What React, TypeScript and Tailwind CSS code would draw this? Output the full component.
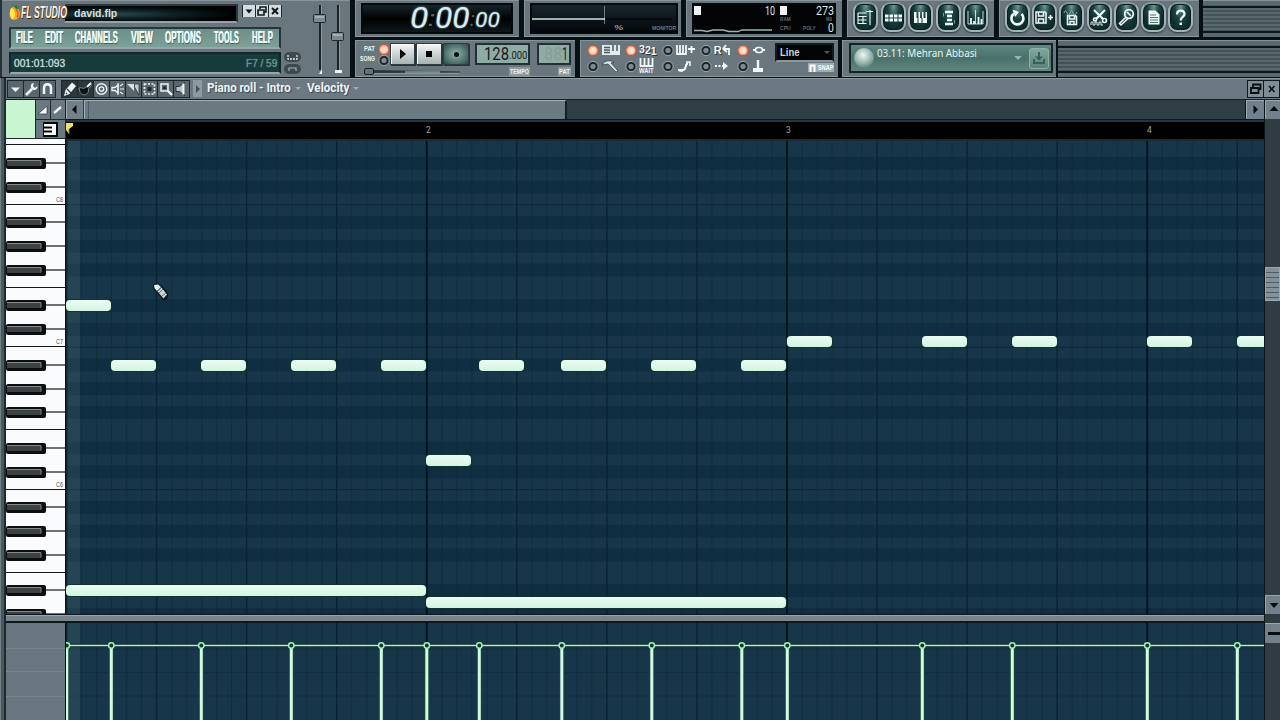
import React, { useLayoutEffect, useRef } from "react";

function Fit({ w, className = "", children }: { w: number; className?: string; children: React.ReactNode }) {
  const ref = useRef<HTMLSpanElement>(null);
  useLayoutEffect(() => {
    const el = ref.current;
    if (el) el.style.transform = `scaleX(${w / el.offsetWidth})`;
  }, [w]);
  return (
    <span className="flex shrink-0" style={{ width: w }}>
      <span ref={ref} className={"block shrink-0 origin-left whitespace-nowrap " + className}>
        {children}
      </span>
    </span>
  );
}

const Panel = ({ className = "", children }: { className?: string; children?: React.ReactNode }) => (
  <div className={"flex shrink-0 border-b border-[#8a979c] bg-[#69767e] shadow-[inset_1px_1px_0_#87949a] " + className}>{children}</div>
);

const Stripes = ({ className = "" }: { className?: string }) => (
  <div className={"flex grow flex-col justify-between border-t border-[#87949a] bg-[#4a5a60] " + className}>
    <div className="h-1 bg-[#5a696f]" />
    <div className="mt-px grow border-y-2 border-[#0c171b] bg-[repeating-linear-gradient(to_bottom,#5a696e_0px,#5a696e_2px,#445359_2px,#445359_4px)]" />
    <div className="h-1 bg-[#5a696f]" />
  </div>
);

function Glyph({ w = 16, h = 16, children }: { w?: number; h?: number; children: React.ReactNode }) {
  return (
    <svg width={w} height={h} viewBox={`0 0 ${w} ${h}`} className="shrink-0" fill="none">
      {children}
    </svg>
  );
}

const menu: [string, number, string][] = [
  ["FILE", 17, "ml-[5px]"],
  ["EDIT", 18, "ml-[12px]"],
  ["CHANNELS", 43, "ml-[12px]"],
  ["VIEW", 22, "ml-[13px]"],
  ["OPTIONS", 36, "ml-[12px]"],
  ["TOOLS", 25, "ml-[13px]"],
  ["HELP", 21, "ml-[13px]"],
];

function LeftPanel() {
  return (
    <div className="flex h-[77px] w-[350px] shrink-0 border-l-2 border-[#26343a] bg-[#69767e] pl-[7px] shadow-[inset_0_1px_0_#87949a]">
      <div className="w-[273px] shrink-0 pt-[3px]">
        <div className="flex h-[20px]">
          <Glyph w={12} h={20}>
            <path d="M5 3C1 5 0 11 1 14c1 3 5 4 7 2 3-2 4-6 2-9-1-2-3-3-5-4Z" fill="#f7a71b" />
            <path d="M2 5c-2 4-1 9 1 11 2 0 3-2 3-5C6 8 4 5 2 5Z" fill="#ffe84a" />
            <path d="M5 4 3 1l3 2 2-2 0 3 2 0-2 3Z" fill="#2e7f2c" />
            <path d="M7 7c2 1 3 4 1 7" stroke="#e85d12" strokeWidth="1.5" />
          </Glyph>
          <Fit w={46} className="font-['Liberation_Sans'] text-[16px] font-bold italic leading-[20px] text-[#fff3e2] [text-shadow:1px_1px_0_#43281c,0_0_2px_#8b4c25]">FL STUDIO</Fit>
          <div className="-ml-[2px] mt-px flex h-[19px] w-[174px] items-center border-2 border-l-0 border-[#2b393e] border-b-[#96a3a7] bg-[radial-gradient(ellipse_at_30%_55%,#28484d_0%,#0b1d21_38%,#010304_70%)] pl-[9px]">
            <Fit w={43} className="font-['Liberation_Sans'] text-[11.5px] font-bold leading-[15px] text-[#d7e1e1]">david.flp</Fit>
          </div>
          <div className="ml-[4px] mt-[2px] flex h-[12px] gap-px bg-[#1b282d] px-px">
            <Glyph w={12} h={12}><path d="M0 0h12v12H0z" fill="#d3dcde" /><path d="M2.500 4.500h7L6 8.500z" fill="#10181b" /></Glyph>
            <Glyph w={12} h={12}><path d="M0 0h12v12H0z" fill="#d3dcde" /><path d="M4 4V2h6v5H8M2 5h6v5H2z" stroke="#10181b" strokeWidth="1.6" /></Glyph>
            <Glyph w={12} h={12}><path d="M0 0h12v12H0z" fill="#d3dcde" /><path d="m3 3 6 6m0-6-6 6" stroke="#10181b" strokeWidth="2" /></Glyph>
          </div>
        </div>
        <div className="mt-[4px] flex h-[22px] w-[272px] items-center border-2 border-[#24363a] border-b-[#9aa6aa] bg-linear-to-b from-[#6c8f89] to-[#7da199]">
          {menu.map(([t, w, m]) => (
            <div key={t} className={m}>
              <Fit w={w} className="font-['Liberation_Sans'] text-[16px] font-bold leading-[18px] text-[#f0fffb] [text-shadow:0_0_1px_#d8ebe6,1px_1px_1px_#31524f]">{t}</Fit>
            </div>
          ))}
        </div>
        <div className="mt-[3px] flex h-[22px] w-[272px] items-center justify-between border-2 border-[#13262a] border-b-[#9aa6aa] bg-[#173b3b] pl-[3px] pr-[2px]">
          <Fit w={51} className="font-['Liberation_Sans'] text-[11px] leading-[16px] text-[#c4d8d6] [text-shadow:0_0_1px_#c4d8d6]">001:01:093</Fit>
          <Fit w={31} className="font-['Liberation_Sans'] text-[11px] leading-[16px] text-[#6f9290] [text-shadow:0_0_1px_#6f9290]">F7 / 59</Fit>
        </div>
      </div>
      <div className="flex w-[22px] shrink-0 flex-col gap-px pl-[2px] pt-[52px]">
        <Glyph w={17} h={11}><rect width="17" height="10" rx="5" fill="#3d4a50" /><path d="M4 3v4h9V3" stroke="#e2eaec" strokeDasharray="2 1" strokeWidth="1.300" /></Glyph>
        <Glyph w={17} h={11}><rect width="17" height="10" rx="5" fill="#3d4a50" /><path d="M5 7V4h7v3" stroke="#a9b6b9" strokeWidth="1.200" /></Glyph>
      </div>
      <Glyph w={44} h={77}>
        <path d="M10 7h12M10 10h12" stroke="#55636a" strokeDasharray="2 6" />
        <path d="M16 5v65M34 5v65" stroke="#182328" strokeWidth="2" />
        <path d="M17.500 5v65M35.500 5v65" stroke="#8d999e" />
        <rect x="9.500" y="14.500" width="12" height="8" rx="1" fill="#7c8a90" stroke="#1d2a2f" />
        <path d="M11 17h9" stroke="#cbd5d8" />
        <rect x="27.500" y="32.500" width="12" height="8" rx="1" fill="#7c8a90" stroke="#1d2a2f" />
        <path d="M29 35h9" stroke="#cbd5d8" />
        <path d="m15 74 3-5v5zM31 73h7v-3h-7z" fill="#eef4f5" />
      </Glyph>
    </div>
  );
}

const digit = "font-['Roboto'] font-normal italic text-[#dcebef] [text-shadow:0_0_2px_#7fb0bb]";

function TimePanel() {
  return (
    <Panel className="w-[164px] px-[6px] pb-[2px] pt-[3px]">
      <div className="flex grow items-end border-2 border-[#05090b] bg-[linear-gradient(to_bottom,#17242a,#030507_45%,#000_50%,#10181c)] pl-[47px]">
        <Fit w={18} className={digit + " text-[30px] leading-[28px]"}>0</Fit>
        <Fit w={7} className="font-['Roboto'] text-[22px] italic leading-[26px] text-[#59686d]">:</Fit>
        <Fit w={35} className={digit + " text-[30px] leading-[28px]"}>00</Fit>
        <Fit w={5} className="font-['Roboto'] text-[20px] italic leading-[26px] text-[#59686d]">:</Fit>
        <Fit w={25} className={digit + " text-[21px] leading-[24px]"}>00</Fit>
      </div>
    </Panel>
  );
}

function ScopePanel() {
  return (
    <Panel className="w-[157px] px-[6px] pb-[2px] pt-[3px]">
      <div className="flex grow flex-col justify-between border-2 border-[#05090b] bg-linear-to-b from-[#19262d] to-[#05080a]">
        <Glyph w={140} h={19}>
          <path d="M72.500 1v18" stroke="#6b7a80" />
          <path d="M0 14h73" stroke="#d8e0e2" strokeWidth="1.700" />
          <path d="M74 14h66" stroke="#06090a" strokeWidth="2" />
        </Glyph>
        <div className="flex items-center pl-[82px]">
          <Fit w={9} className="font-['Liberation_Sans'] text-[7px] font-bold italic leading-[8px] text-[#8a979b]">%</Fit>
          <div className="ml-[29px]"><Fit w={24} className="font-['Liberation_Sans'] text-[6px] font-bold leading-[8px] text-[#6f7c80]">MONITOR</Fit></div>
        </div>
      </div>
    </Panel>
  );
}

function CpuPanel() {
  const tiny = "font-['Liberation_Sans'] text-[6px] font-bold leading-[7px] text-[#5d6a6e]";
  const num = "font-['Roboto'] text-[12.500px] leading-[11px] text-[#dde8ea]";
  return (
    <Panel className="w-[156px] px-[6px] pb-[2px] pt-[3px]">
      <div className="flex grow border-2 border-[#05090b] bg-[#020405]">
        <div className="flex w-[81px] shrink-0 flex-col">
          <div className="flex items-start justify-between">
            <div className="mt-px h-[9px] w-[7px] bg-[#eef3f4]" />
            <Fit w={10} className={num}>10</Fit>
          </div>
          <Glyph w={81} h={17}><path d="M0 14.500h8l5 1 6-1.500h10l6 1.500h9l4-1.500h30" stroke="#a3b0b3" strokeWidth="1.300" /></Glyph>
        </div>
        <div className="flex grow flex-col pl-[5px]">
          <div className="flex items-start justify-between">
            <div className="mt-px h-[9px] w-[7px] bg-[#eef3f4]" />
            <Fit w={18} className={num}>273</Fit>
          </div>
          <div className="flex justify-between pr-[2px]"><Fit w={11} className={tiny}>RAM</Fit><Fit w={6} className={tiny}>MB</Fit></div>
          <div className="flex items-center justify-between">
            <Fit w={11} className={tiny}>CPU</Fit>
            <Fit w={13} className={tiny}>POLY</Fit>
            <Fit w={6} className={"font-['Roboto'] text-[12px] leading-[10px] text-[#dde8ea]"}>0</Fit>
          </div>
        </div>
      </div>
    </Panel>
  );
}

function RoundButton({ children }: { children: React.ReactNode }) {
  return (
    <div className="flex h-[30px] w-[25px] shrink-0 items-center justify-center rounded-[9px] border-2 border-[#a5b3b5] border-t-[#82949a] bg-[radial-gradient(ellipse_at_50%_10%,#6c9690_0%,#1b4241_38%,#0a2a2a_75%,#2b5c57_100%)] shadow-[inset_0_0_0_1px_#0b1d1f,0_1px_2px_#26343a]">
      <svg width="19" height="19" viewBox="0 0 19 19" fill="none" stroke="#f1fbf9" strokeWidth="1.600" className="shrink-0">
        {children}
      </svg>
    </div>
  );
}

function WindowButtons() {
  return (
    <Panel className="w-[147px] gap-[2.500px] pl-[6px] pt-[2px]">
      <RoundButton><path d="M2 5h8.500M2 8.500h8.500M2 12h8.500M2 15.500h8.500M14 2v15M10 3.500h7M2 5v11M7 8v8" strokeWidth="1.100" /></RoundButton>
      <RoundButton><path d="M1 8h3.500m1 0h3.500m1 0h3.500m1 0H18M1 12h3.500m1 0h3.500m1 0h3.500m1 0H18" strokeWidth="3.200" /></RoundButton>
      <RoundButton><path d="M3 4v11h13V4h-1.500v6h-2V4h-1.500v6h-2V4H7.500v6h-2V4Z" fill="#f1fbf9" stroke="none" /><path d="M7 10v5m4-5v5" stroke="#173b3b" strokeWidth="1" /></RoundButton>
      <RoundButton><path d="M6 4h8M8 8h5M8 12h5M6 16h8" strokeWidth="2.400" /><path d="M4.500 5v3.500M15.500 12v3.500" stroke="#8fb2ad" strokeWidth=".8" /></RoundButton>
      <RoundButton><path d="M2 3v13h15V3M9.500 2v14" strokeWidth=".8" /><path d="M5 16v-6M8 16v-3M12.500 16V9M15.500 16v-5" strokeWidth="1.800" /></RoundButton>
    </Panel>
  );
}

function ActionButtons() {
  return (
    <Panel className="w-[200px] gap-[2.200px] pl-[6px] pt-[2px]">
      <RoundButton><path d="M13.500 6A6 6 0 1 1 6 5.500" strokeWidth="2.600" /><path d="M4.500 1.500 11 4 7 9Z" fill="#f1fbf9" stroke="none" /></RoundButton>
      <RoundButton><path d="M1 4h9l1 1v10H1zM3.500 4v4h5V4M3.500 15v-4h5v4" strokeWidth="1.500" /><path d="M13 9.500h5M15.500 7v5" /></RoundButton>
      <RoundButton><path d="M5.500 7.500h8l1 1v8h-9zM7.500 8v3h5V8M8 16v-2.500h4V16" strokeWidth="1.500" /><path d="M2 5c1-3 2-3 3 0s2 3 3 0 2-3 3 0 2 3 4-1" stroke="#8fb2ad" strokeWidth="1" /></RoundButton>
      <RoundButton><path d="m4 2 9 9M15 2 6 11" strokeWidth="2" /><circle cx="14.500" cy="12.500" r="2" /><circle cx="5" cy="11.500" r="1.500" /><path d="M1 17v-3h2v3h2v-3h2v3h2v-3h2v3h2" strokeWidth=".9" /></RoundButton>
      <RoundButton><circle cx="12" cy="6" r="4.300" strokeWidth="1.800" /><path d="M9 9 2.500 15.500l1.500 1.500 7-6.500M10 4l4 4" /></RoundButton>
      <RoundButton><path d="M4.500 2.500h7l4 4v10h-11z" fill="#f1fbf9" stroke="none" /><path d="M6 7h6M6 9.500h8M6 12h8M6 14.500h8" stroke="#47716c" strokeWidth="1" /></RoundButton>
      <RoundButton><path d="M6 6.500c0-5 7.500-5 7.500-.5 0 3-3.800 3-3.800 6.500" strokeWidth="2.300" /><path d="M8.500 14.500h2.500v2.500H8.500z" fill="#f1fbf9" stroke="none" /></RoundButton>
    </Panel>
  );
}

const Led = ({ on }: { on?: boolean }) => (
  <Glyph w={12} h={13}>
    <circle cx="6" cy="6.500" r="5.200" fill={on ? "#ff8d62" : "#2a363b"} stroke={on ? "#b9563f" : "#9aa7ab"} />
    <circle cx="6" cy="6.500" r="3.300" fill={on ? "#ffe3cf" : "#7b888d"} stroke={on ? "#ffc2a0" : "#152024"} strokeWidth="1.200" />
  </Glyph>
);

const miniWhite = "font-['Liberation_Sans'] text-[7.5px] font-bold leading-[9px] text-[#eef5f6]";

function Transport() {
  const key = "flex h-[22px] items-center justify-center border border-[#2e3b40] shadow-[inset_1px_1px_0_#fff,1px_1px_0_#27343a]";
  return (
    <Panel className="w-[220px] pl-[5px] pt-[3px]">
      <div className="flex w-[137px] shrink-0 flex-col">
        <div className="flex h-[23px]">
          <div className="flex w-[18px] flex-col items-end gap-[1px] pr-[3px] pt-px">
            <Fit w={11} className={miniWhite}>PAT</Fit>
            <Fit w={15} className={miniWhite}>SONG</Fit>
          </div>
          <div className="flex flex-col -space-y-[2px]"><Led on /><Led /></div>
          <div className={key + " w-[25px] bg-linear-to-b from-[#f3f6f6] to-[#a7b2b4]"}><Glyph w={10} h={12}><path d="M2 1v10l6-5z" fill="#020405" /></Glyph></div>
          <div className={key + " ml-px w-[26px] bg-linear-to-b from-[#f3f6f6] to-[#a7b2b4]"}><div className="h-[6px] w-[6px] bg-[#020405]" /></div>
          <div className="ml-px flex h-[22px] w-[26px] items-center justify-center border border-[#2e3b40] bg-[radial-gradient(#93b3ab,#2b4b4a)] shadow-[1px_1px_0_#27343a]"><div className="h-[5px] w-[5px] rounded-full bg-[#04100f]" /></div>
        </div>
        <Glyph w={112} h={12}>
          <path d="M12 4 100 5.500v1L12 7z" fill="#27363b" />
          <path d="M14 7.500h85" stroke="#8b9a9e" />
          <path d="M45 6h35" stroke="#a9cdc6" />
          <rect x="4.500" y="2.500" width="9" height="6" rx="1.500" fill="#63717a" stroke="#172226" />
        </Glyph>
      </div>
      <div className="-ml-[22px] flex w-[55px] shrink-0 flex-col items-end">
        <div className="flex h-[22px] w-[55px] items-end border-2 border-[#213035] bg-[#90aaa4] pl-[7px]">
          <Fit w={25} className="font-['Roboto'] text-[19px] leading-[19px] text-[#10201f]">128</Fit>
          <Fit w={18} className="font-['Roboto'] text-[11px] leading-[15px] text-[#10201f]">.000</Fit>
        </div>
        <div className="mt-[2px] flex bg-[#8b999e] px-px"><Fit w={19} className={miniWhite}>TEMPO</Fit></div>
      </div>
      <div className="ml-[7px] flex w-[34px] shrink-0 flex-col items-end">
        <div className="flex h-[22px] w-[34px] items-end justify-end border-2 border-[#213035] bg-[#90aaa4] pr-px">
          <Fit w={18} className="font-['Roboto'] text-[19px] leading-[19px] text-[#859f99]">88</Fit>
          <Fit w={6} className="font-['Roboto'] text-[19px] leading-[19px] text-[#10201f]">1</Fit>
        </div>
        <div className="mt-[2px] flex bg-[#8b999e] px-px"><Fit w={11} className={miniWhite}>PAT</Fit></div>
      </div>
    </Panel>
  );
}

function Switches() {
  const W = "#f2f7f8";
  const cell = "flex h-[16px] items-center gap-[2px]";
  return (
    <Panel className="w-[258px] pl-[7px] pt-[2px]">
      <div className="grid w-[188px] shrink-0 grid-cols-5 gap-y-0 self-start">
        <div className={cell}><Led on /><Glyph w={20} h={14}><path d="M1 2h18v10H1z" fill="#e2eaec" /><path d="M3 4.500h6M3 7h6M3 9.500h6M12 2v6M16 2v6" stroke="#4a595f" strokeWidth="1.500" /></Glyph></div>
        <div className={cell}><Led on /><Fit w={18} className="font-['Liberation_Sans'] text-[10px] font-bold leading-[12px] text-[#f2f7f8] [text-shadow:1px_1px_0_#27343a]">3<span className="relative top-px">2</span><span className="relative top-[2px]">1</span></Fit></div>
        <div className={cell}><Led /><Glyph w={20} h={14}><path d="M1 2v9h9V2M4 2v8M7 2v8M12 6h7M15.500 3v7" stroke={W} strokeWidth="1.800" /></Glyph></div>
        <div className={cell}><Led /><Fit w={8} className="font-['Liberation_Sans'] text-[11px] font-bold leading-[12px] text-[#f2f7f8] [text-shadow:1px_1px_0_#27343a]">R</Fit><div className="-ml-[2px] flex"><Glyph w={9} h={14}><path d="M1 6h6v6M4 2 1 6l4 3" stroke={W} strokeWidth="1.800" /></Glyph></div></div>
        <div className={cell}><Led on /><Glyph w={16} h={14}><path d="M2 7h3M11 7h3" stroke={W} strokeWidth="2" /><rect x="4.500" y="4.500" width="7" height="5" rx="2.500" stroke={W} strokeWidth="1.600" /></Glyph></div>
        <div className={cell}><Led /><Glyph w={20} h={14}><path d="M1 6C4 1 9 1 13 3l-3 1 7 8-2 1-8-8z" fill="#dbe4e6" stroke="#2b393e" strokeWidth=".7" /></Glyph></div>
        <div className={cell}><Led /><div className="flex flex-col"><Glyph w={16} h={9}><path d="M1.500 0v8h12V0M5.500 0v8M9.500 0v8" stroke={W} strokeWidth="1.800" /></Glyph><Fit w={15} className="font-['Liberation_Sans'] text-[7px] font-bold leading-[7px] text-[#f2f7f8]">WAIT</Fit></div></div>
        <div className={cell}><Led /><Glyph w={16} h={14}><path d="M2 11h5c4 0 1-5 5-7" stroke={W} strokeWidth="2" /><path d="M10 3h4v4M3 12h4" stroke={W} strokeWidth="1.500" /></Glyph></div>
        <div className={cell}><Led /><Glyph w={17} h={14}><path d="M1 7h10" stroke={W} strokeWidth="2" strokeDasharray="2 1.500" /><path d="M9 3v8l5-4z" fill={W} /></Glyph></div>
        <div className={cell}><Led /><Glyph w={14} h={14}><path d="M2 9h10v4H2z" fill={W} /><path d="M7 1v9" stroke={W} strokeWidth="2.400" /></Glyph></div>
      </div>
      <div className="flex w-[59px] shrink-0 flex-col items-end">
        <div className="mt-px flex h-[19px] w-[59px] items-center border-2 border-[#121c20] border-b-[#8a979c] bg-[#020405] pl-[3px]">
          <Fit w={20} className="font-['Liberation_Sans'] text-[10px] font-bold leading-[12px] text-[#c9d5d7]">Line</Fit>
          <div className="ml-[24px]"><Glyph w={6} h={4}><path d="M0 0h6L3 3z" fill="#4d5c61" /></Glyph></div>
        </div>
        <div className="mt-px flex h-[9px] items-center gap-[2px] bg-[#9faeb3] px-px">
          <Glyph w={7} h={8}><path d="M1.500 8V1.500h4V8" stroke="#fff" strokeWidth="2" /></Glyph>
          <Fit w={15} className="font-['Liberation_Sans'] text-[7px] font-bold leading-[8px] text-white">SNAP</Fit>
        </div>
      </div>
    </Panel>
  );
}

function NewsPanel() {
  return (
    <Panel className="w-[214px] px-[7px] pb-[3px] pt-[3px]">
      <div className="flex grow items-center border-2 border-[#142326] bg-linear-to-b from-[#5e8780] via-[#4a706b] to-[#5f877f] pl-[3px] pr-[2px]">
        <div className="h-[20px] w-[20px] rounded-full bg-[radial-gradient(circle_at_45%_35%,#eef6f3,#9dbab2_45%,#55817a_80%)]" />
        <div className="-mt-[11px] ml-[3px]"><Fit w={100} className="font-['Noto_Sans'] text-[11px] leading-[14px] text-[#e9f3f0]">03.11: Mehran Abbasi</Fit></div>
        <div className="ml-[37px]"><Glyph w={8} h={5}><path d="M0 0h8L4 4z" fill="#94b4ac" /></Glyph></div>
        <div className="ml-[7px] flex h-[21px] w-[20px] items-center justify-center rounded-[3px] border border-[#8fb0a7] bg-linear-to-b from-[#84a59c] to-[#5b837b]">
          <Glyph w={14} h={14}><path d="M7 1v7M2 8v4h10V8" stroke="#36605b" strokeWidth="2" /><path d="M3 5.500h8l-4 4z" fill="#36605b" /></Glyph>
        </div>
      </div>
    </Panel>
  );
}

const ToolBtn = ({ dark, children }: { dark?: boolean; children: React.ReactNode }) => (
  <div className={"flex h-[16px] w-[15px] shrink-0 items-center justify-center " + (dark ? "bg-[#2c373c]" : "bg-[#59666d]")}>
    <svg width="15" height="16" viewBox="0 0 15 16" fill="none" stroke="#edf4f5" strokeWidth="1.700">{children}</svg>
  </div>
);

function Toolbar() {
  const title = "font-['Roboto'] text-[12.5px] font-bold leading-[16px] text-[#eef4f5] [text-shadow:1px_1px_1px_#3e4a50]";
  return (
    <div className="flex h-[22px] items-center border-b border-[#142024] bg-[#6c7982] pl-px shadow-[inset_0_1px_0_#8a979c]">
      <div className="flex gap-px border border-[#1a262b] bg-[#1a262b]">
        <ToolBtn><path d="M3 6.500h9L7.500 11z" fill="#edf4f5" stroke="none" /></ToolBtn>
        <ToolBtn><path d="m2 14 6-6" strokeWidth="2.600" /><path d="M10 2C6 2 6 7 8.500 8.500 11 10 14 8 13.500 5L11 7 9 5z" fill="#edf4f5" stroke="none" /></ToolBtn>
        <ToolBtn><path d="M4 13V7c0-5 7-5 7 0v6" strokeWidth="2.500" /></ToolBtn>
      </div>
      <div className="ml-[5px] flex gap-px border border-[#1a262b] bg-[#1a262b]">
        <ToolBtn dark><path d="m2 15 1.500-6L10 1.500 14 5 7.500 13z" fill="#edf4f5" stroke="none" /><path d="m5 8 4 4M4 12l1 1" stroke="#27343a" strokeWidth="1.200" /></ToolBtn>
        <ToolBtn dark><path d="M1 7c3-1 3 1 6 0l5-5 1.500 2-3 4c1 7-8 8-9 1z" fill="#0a1215" stroke="#8d9a9f" strokeWidth=".8" /><path d="m9 6 4-4" strokeWidth="2" /></ToolBtn>
        <ToolBtn><circle cx="7.500" cy="8" r="5.300" strokeWidth="1.400" /><circle cx="7.500" cy="8" r="2.200" strokeWidth="1.300" /></ToolBtn>
        <ToolBtn><path d="M2 6.500h3L8 4v8L5 9.500H2z" strokeWidth="1.300" /><path d="m10 5 3-2M10 8h4M10 11l3 2M8 2v12" strokeWidth="1.100" /></ToolBtn>
        <ToolBtn><path d="M1 3h7v7z" fill="#d8e1e3" stroke="none" /><path d="M8.500 3H13v11L8.500 6z" fill="#c3ced1" stroke="#27343a" strokeWidth=".8" /></ToolBtn>
        <ToolBtn><rect x="2.500" y="3" width="10" height="10" strokeDasharray="2 1.500" /><rect x="5.500" y="6" width="4" height="4" fill="#1d292e" stroke="none" /></ToolBtn>
        <ToolBtn><rect x="3" y="3" width="7" height="7" strokeWidth="1.500" /><path d="m10 10 4 4" strokeWidth="2.300" /><path d="M5 5.500h3v2.500H5z" fill="#1d292e" stroke="none" /></ToolBtn>
        <ToolBtn><path d="M2 5.500h3.500l5-4v13l-5-4H2z" fill="#b7c3c6" stroke="#10191d" strokeWidth=".8" /><path d="M9.500 2.500v11" strokeWidth="2.200" /></ToolBtn>
      </div>
      <div className="ml-[3px] flex h-[17px] w-[9px] items-center justify-center bg-[#8c9aa1]"><Glyph w={5} h={8}><path d="M1 0v8l4-4z" fill="#435158" /></Glyph></div>
      <div className="-mt-px ml-[5px]"><Fit w={84} className={title}>Piano roll - Intro</Fit></div>
      <div className="ml-[3px]"><Glyph w={8} h={5}><path d="M1 1h6L4 4z" fill="#9fabb0" /></Glyph></div>
      <div className="-mt-px ml-[5px]"><Fit w={42} className={title}>Velocity</Fit></div>
      <div className="ml-[3px]"><Glyph w={8} h={5}><path d="M1 1h6L4 4z" fill="#9fabb0" /></Glyph></div>
      <div className="ml-auto flex gap-px border border-[#10191d] bg-[#10191d]">
        <Glyph w={15} h={16}><path d="M0 0h15v16H0z" fill="#7f8e96" /><path d="M5 6V3.500h7.500V8H11M3 7h7.500v5H3z" stroke="#0a1114" strokeWidth="1.800" /></Glyph>
        <Glyph w={15} h={16}><path d="M0 0h15v16H0z" fill="#7f8e96" /><path d="m5 5 5.500 6m0-6L5 11" stroke="#0a1114" strokeWidth="1.600" /></Glyph>
      </div>
    </div>
  );
}

const ROW = 11.87;
const BASE = 347.2;
const BLACK = [1, 3, 6, 8, 10];
const rows = Array.from({ length: 44 }, (_, i) => {
  const n = i - 24;
  return { n, pc: ((n % 12) + 12) % 12, bottom: BASE - n * ROW };
});

function Keyboard() {
  return (
    <svg width="60" height="475" viewBox="6 139 60 475" className="block">
      <rect x="6" y="139" width="60" height="475" fill="#f9fbfc" />
      {rows.filter((r) => r.pc === 0 || r.pc === 5).map((r) => (
        <path key={r.n} d={`M6 ${Math.round(r.bottom) - 0.5}h59`} stroke="#10181c" />
      ))}
      {rows.filter((r) => BLACK.includes(r.pc)).map((r) => {
        const c = Math.round(r.bottom - ROW / 2 - 0.2) + 0.5;
        return (
          <g key={r.n}>
            <path d={`M44 ${c - 0.5}h21`} stroke="#10181c" strokeWidth="1.200" />
            <rect x="6" y={c - 5.500} width="40" height="11" rx="2" fill="#0b0e10" />
            <rect x="7" y={c - 2.500} width="34" height="5" fill="#3c4144" />
            <path d={`M7 ${c - 3}h34v5`} stroke="#83898c" strokeWidth="1" fill="none" />
          </g>
        );
      })}
      <path d="M65.500 139v475" stroke="#0a1216" />
      {([["C8", 202], ["C7", 344], ["C6", 486.500]] as [string, number][]).map(([t, y]) => (
        <text key={t} x="56" y={y} fontSize="6.500" fill="#4b5357" fontFamily="Liberation Sans" textLength="7" lengthAdjust="spacingAndGlyphs">{t}</text>
      ))}
    </svg>
  );
}

const steps = Array.from({ length: 80 }, (_, i) => ({ i, x: 66.500 + i * 15.010 }));
const stepColor = (i: number) => (i % 24 === 0 ? "#02101d" : i % 6 === 0 ? "#0a2332" : "#0e2a3a");

function GridLines({ top, bottom }: { top: number; bottom: number }) {
  return (
    <>
      {steps.map(({ i, x }) => (
        <path key={i} d={`M${x} ${top}V${bottom}`} stroke={stepColor(i)} strokeWidth={i % 24 === 0 ? 1.800 : i % 6 === 0 ? 1.400 : 1} opacity={i % 6 === 0 ? 1 : 0.550} />
      ))}
    </>
  );
}

const notes: [number, number, number][] = [
  [66, 300, 45], [111, 360, 45], [201, 360, 45], [291, 360, 45], [381, 360, 45],
  [426, 455, 45], [479, 360, 45], [561, 360, 45], [651, 360, 45], [741, 360, 45],
  [787, 336, 45], [922, 336, 45], [1012, 336, 45], [1147, 336, 45], [1237, 336, 45],
  [66, 585, 360], [426, 597, 360],
];

function PianoGrid() {
  return (
    <div className="relative h-[473px] overflow-hidden">
      <svg width="1198" height="473" viewBox="66 141 1198 473" className="block">
        <rect x="66" y="141" width="1198" height="473" fill="#183649" />
        {rows.filter((r) => BLACK.includes(r.pc)).map((r) => (
          <rect key={r.n} x="66" y={r.bottom - ROW - 0.500} width="1198" height={ROW + 1} fill="#0f2e41" />
        ))}
        {rows.filter((r) => r.pc === 0).map((r) => (
          <path key={r.n} d={`M66 ${r.bottom}h1198`} stroke="#0c2739" />
        ))}
        <GridLines top={141} bottom={614} />
        <rect x="66" y="141" width="14" height="473" fill="#7fa09a" opacity=".14" />
      </svg>
      {notes.map(([x, y, w]) => (
        <div
          key={`${x}-${y}`}
          className="absolute h-[11px] rounded-[4px] bg-linear-to-b from-[#e9fdf2] to-[#d3f5e2] shadow-[0_0_0_1px_#12342f]"
          style={{ left: x - 66, top: y - 141, width: w }}
        />
      ))}
      <svg width="16" height="18" viewBox="0 0 16 18" className="absolute left-[87px] top-[142px]">
        <path d="M0 1 5 .5l4 2 6.500 8-1.500 6-4 1-6-7.500L0 5z" fill="#0c1a22" />
        <path d="m1 2 4-.5 3 2.500-4 4-2.500-3z" fill="#e2f7f6" />
        <path d="m4.500 8.500 4-4 5.500 7-3.500 4z" fill="#cfd0d8" />
        <path d="m6 10 4-4M9 13l4-3" stroke="#6d7680" strokeWidth="1" />
      </svg>
    </div>
  );
}

const stems = [66.500, 111, 201, 291, 381, 426.500, 479, 561.500, 651.500, 741.500, 787, 922, 1012, 1147, 1237];

function VelocityLane() {
  return (
    <svg width="1198" height="97" viewBox="66 623 1198 97" className="block shrink-0">
      <rect x="66" y="623" width="1198" height="97" fill="#183649" />
      {[649, 672.500, 696].map((y) => <path key={y} d={`M66 ${y}h1198`} stroke="#122f40" />)}
      <GridLines top={623} bottom={720} />
      <rect x="66" y="623" width="14" height="97" fill="#7fa09a" opacity=".14" />
      <path d="M66 645.500h1198" stroke="#0c2b2a" strokeWidth="3.500" />
      <path d="M66 645.500h1198" stroke="#b9eccb" strokeWidth="1.400" />
      {stems.map((x) => (
        <g key={x}>
          <path d={`M${x + 0.3} 648v72`} stroke="#184635" strokeWidth="5" />
          <path d={`M${x + 0.3} 648v72`} stroke="#d3f8e3" strokeWidth="3" />
          <circle cx={x + 0.3} cy="645.500" r="2.700" fill="#12382f" stroke="#a8eeb6" strokeWidth="1.500" />
        </g>
      ))}
    </svg>
  );
}

const Arrow = ({ d, w }: { d: string; w: number }) => (
  <Glyph w={w} h={19}>
    <path d={`M0 0h${w}v19H0z`} fill="#71808a" />
    <path d={`M.5 19V.5H${w}`} stroke="#9aa8ae" />
    <path d={d} fill="#070d10" />
  </Glyph>
);

function Ruler() {
  return (
    <div className="relative h-[21px] border-y-2 border-t-[#27343b] border-b-[#1b2a33] bg-black">
      <svg width="8" height="12" viewBox="0 0 8 12" className="absolute left-0 top-px"><path d="M0 0h7v3L3 6v5L0 7z" fill="#f0df6c" /><path d="M3 6v5" stroke="#8c7d2a" /></svg>
      {([["2", 360], ["3", 720], ["4", 1081]] as [string, number][]).map(([t, x]) => (
        <span key={t} className="absolute top-[3px] font-['Roboto'] text-[8.5px] leading-[10px] text-[#9aa6aa]" style={{ left: x }}>{t}</span>
      ))}
    </div>
  );
}

export default function App() {
  return (
    <div className="flex h-[720px] w-[1280px] flex-col overflow-hidden bg-[#071014]">
      <div className="flex h-[78px] shrink-0 gap-[5px]">
        <LeftPanel />
        <div className="flex grow flex-col gap-[3px]">
          <div className="flex h-[37px] gap-[5px]">
            <TimePanel />
            <ScopePanel />
            <CpuPanel />
            <WindowButtons />
            <ActionButtons />
            <Stripes className="-ml-[1px]" />
          </div>
          <div className="flex h-[37px]">
            <Transport />
            <div className="w-[5px]" />
            <Switches />
            <div className="w-[4px]" />
            <NewsPanel />
            <div className="w-[2px]" />
            <Stripes />
          </div>
        </div>
      </div>
      <div className="flex grow">
        <div className="w-[6px] shrink-0 border-l border-r-2 border-l-[#728087] border-r-[#1c292e] bg-[#4b585e]" />
        <div className="flex grow flex-col">
          <Toolbar />
          <div className="flex h-[620px]">
            <div className="w-[1258px] shrink-0">
              <div className="flex h-[514px]">
                <div className="w-[60px] shrink-0">
                  <div className="flex h-[39px] border-b border-[#1b282d] bg-[#1b282d]">
                    <div className="w-[29px] bg-[#c9f5d1]" />
                    <div className="ml-px flex w-[29px] flex-col gap-px">
                      <div className="flex h-[19px] gap-px">
                        <div className="flex w-[14px] items-center justify-center bg-[#6b7880]"><Glyph w={10} h={10}><path d="M0 9 9 1v8z" fill="#f1f6f7" stroke="#27343a" strokeWidth=".7" /></Glyph></div>
                        <div className="flex w-[14px] items-center justify-center bg-[#6b7880]"><Glyph w={10} h={10}><path d="m1 8 7-6" stroke="#f1f6f7" strokeWidth="2.400" /></Glyph></div>
                      </div>
                      <div className="flex grow items-center justify-center bg-[#6b7880]">
                        <Glyph w={15} h={15}><path d="M0 0h15v15H0z" fill="#04080a" /><path d="M1 2h12v11H1z" fill="#f6fafa" /><path d="M0 5.500h9M0 9.500h9" stroke="#04080a" strokeWidth="2" /></Glyph>
                      </div>
                    </div>
                  </div>
                  <Keyboard />
                </div>
                <div className="flex grow flex-col">
                  <div className="flex h-[20px] border-b border-[#10191d] bg-[#303e45]">
                    <Arrow w={17} d="M6 9.500 10.500 5v9z" />
                    <div className="ml-px h-[19px] w-[483px] border-l border-r-2 border-t border-[#a2afb4] border-r-[#131e22] bg-[#6b7982] shadow-[inset_3px_0_0_#6b7982,inset_4px_0_0_#4c5a61]" />
                    <div className="ml-auto border-l border-[#0c1417]"><Arrow w={18} d="M12 9.500 7.500 5v9z" /></div>
                  </div>
                  <Ruler />
                  <PianoGrid />
                </div>
              </div>
              <div className="h-[9px] border-b-2 border-t border-[#0d181c] bg-[#78848c] shadow-[inset_0_1px_0_#9aa5ab]" />
              <div className="flex h-[97px]">
                <div className="w-[60px] shrink-0 border-r border-[#0a1216] bg-[#687680] bg-[linear-gradient(to_bottom,transparent_25px,#77858d_25px,#77858d_26px,transparent_26px,transparent_48px,#77858d_48px,#77858d_49px,transparent_49px,transparent_73px,#77858d_73px,#77858d_74px,transparent_74px)]" />
                <VelocityLane />
              </div>
            </div>
            <div className="flex w-[16px] flex-col border-l border-[#0c1417] bg-[#2f3c43]">
              <Arrow w={17} d="M9 6l4.500 5h-9z" />
              <div className="mt-[148px] h-[34px] border border-[#9aa8ae] bg-[repeating-linear-gradient(to_bottom,#82919a_0px,#82919a_4px,#4d5c64_4px,#4d5c64_5px)]" />
              <div className="mt-[294px]"><Arrow w={17} d="M9 13 4.500 8h9z" /></div>
              <div className="mt-[9px] flex h-[20px] items-center border-t border-[#9aa8ae] bg-[#71808a] pl-[3px]"><div className="h-[3px] w-[12px] bg-[#070d10]" /></div>
            </div>
          </div>
        </div>
      </div>
    </div>
  );
}
